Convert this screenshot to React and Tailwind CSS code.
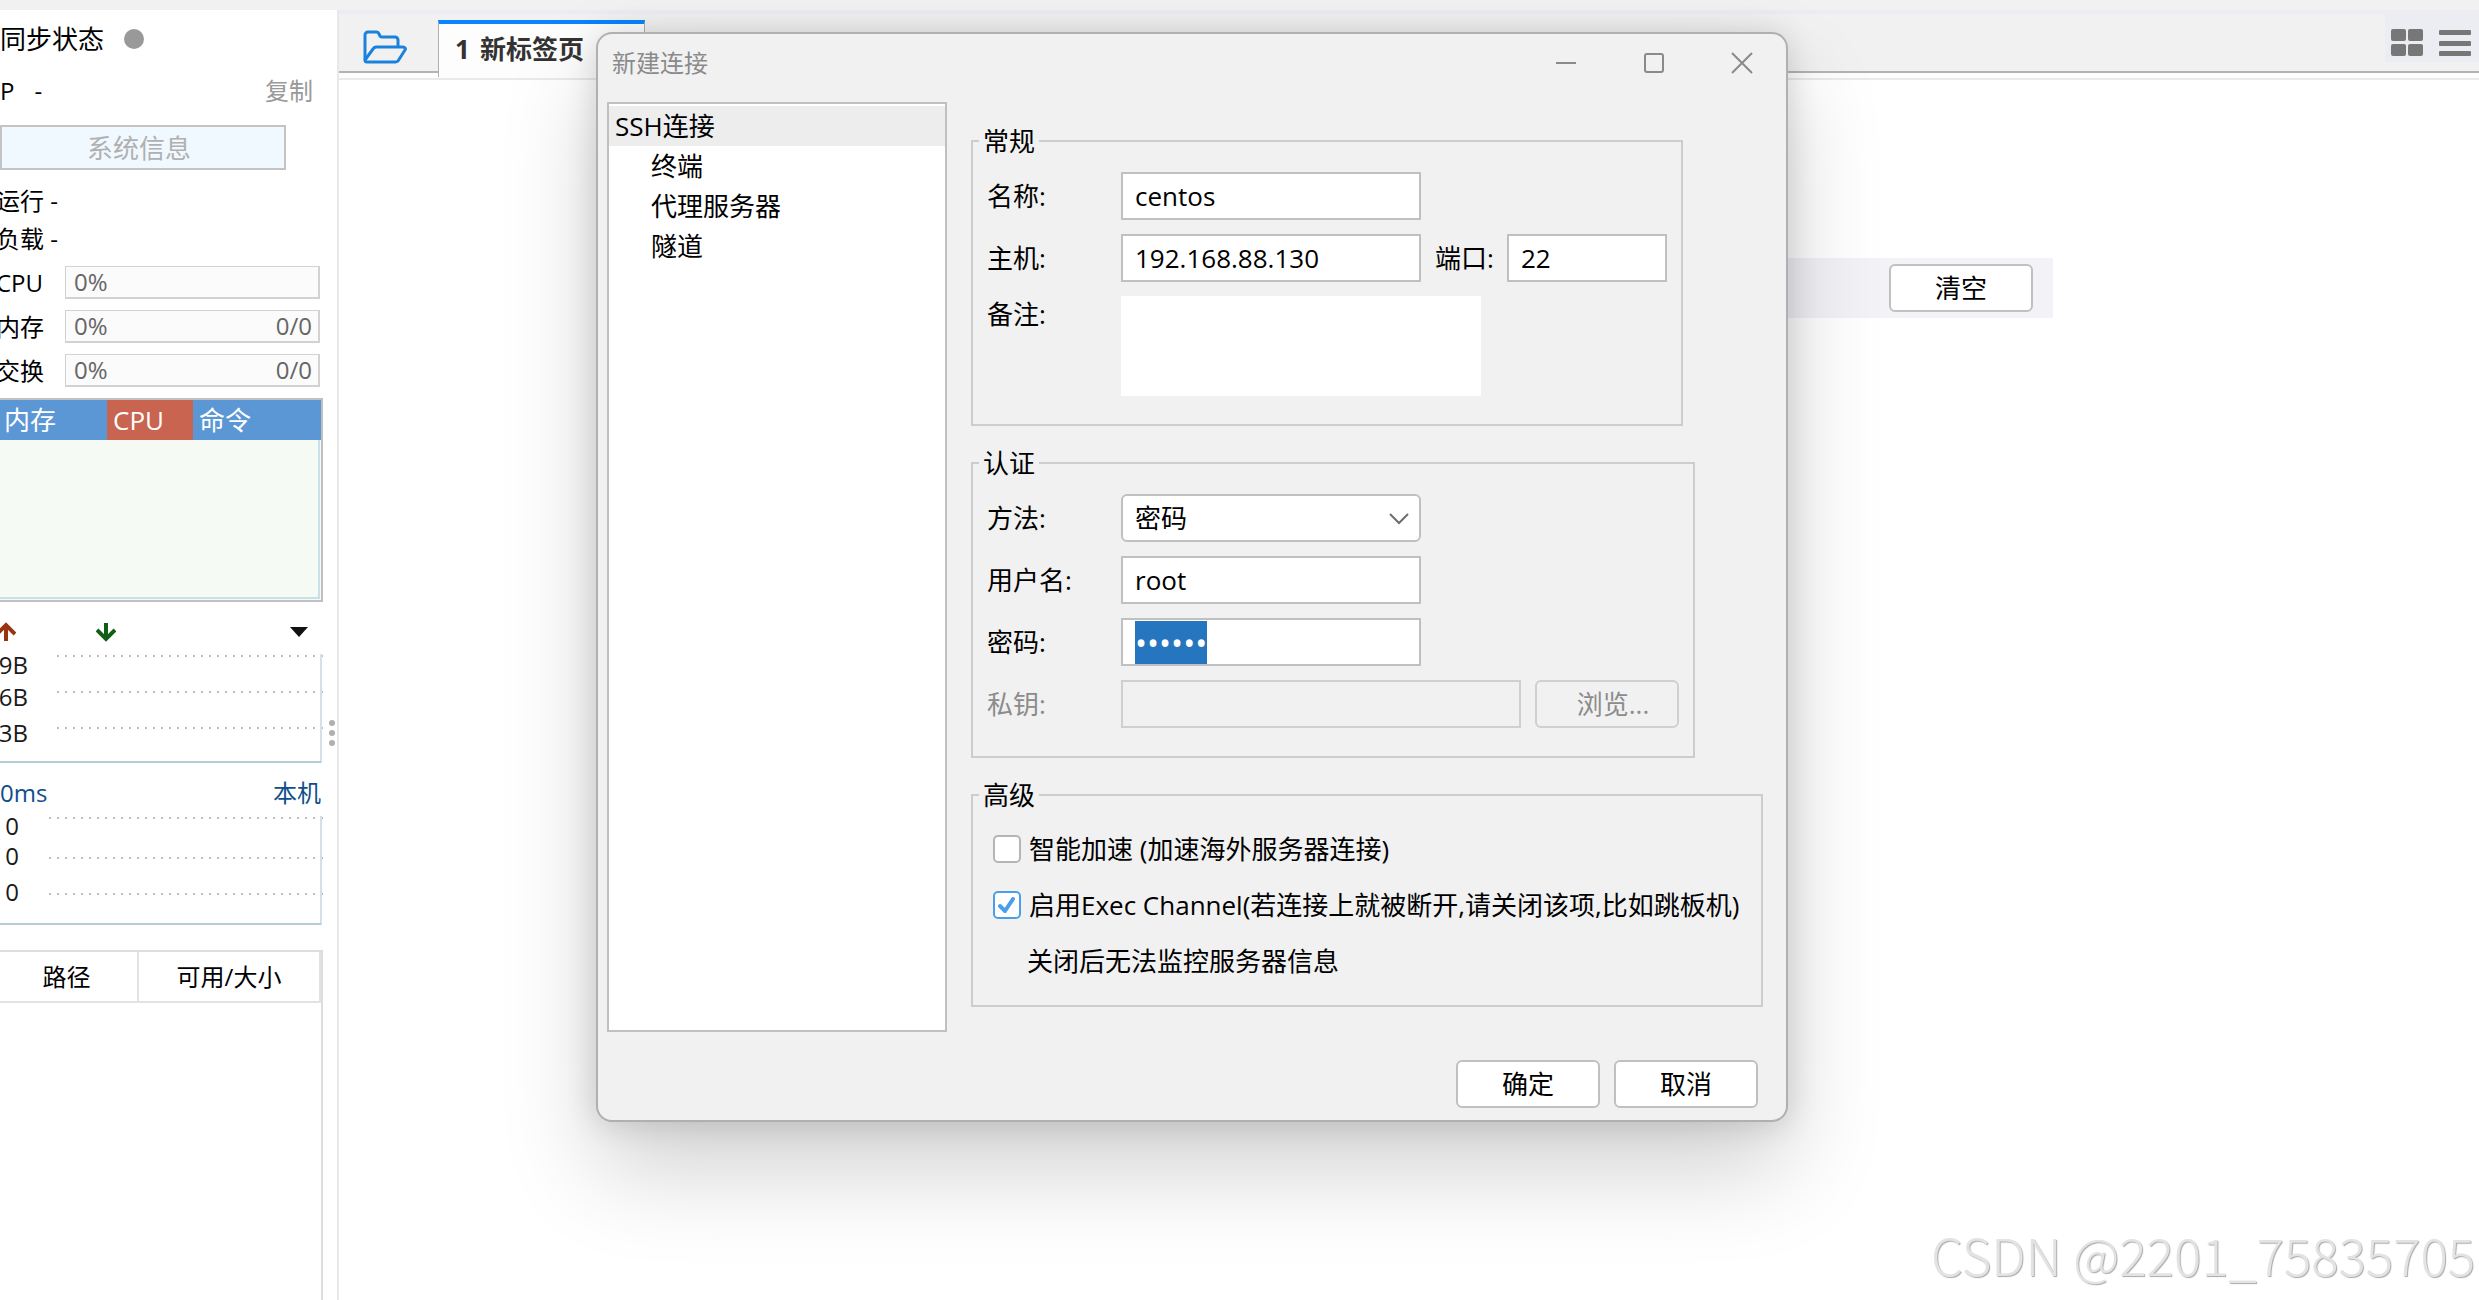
import React, { useEffect, useRef } from "react";

const fieldClass =
  "h-12 border-2 border-[#c0c0c0] bg-white px-3 leading-9 text-black outline-none disabled:border-[#cfcfcf] disabled:bg-transparent";

const buttonClass =
  "h-12 w-36 rounded-md border-2 border-[#c0c0c0] bg-white text-[26px] leading-9 text-black disabled:border-[#cfcfcf] disabled:bg-transparent disabled:text-[#8c8c8c]";

const meters = [
  { label: "CPU", percent: "0%", usage: "" },
  { label: "内存", percent: "0%", usage: "0/0" },
  { label: "交换", percent: "0%", usage: "0/0" },
];

const networkChart = {
  start: 61,
  labelEnd: 32,
  lines: [2, 38, 74],
  labels: [
    { text: "9B", y: 20 },
    { text: "6B", y: 52 },
    { text: "3B", y: 88 },
  ],
};

const pingChart = {
  start: 53,
  labelEnd: 23,
  lines: [2, 42, 78],
  labels: [
    { text: "0", y: 19 },
    { text: "0", y: 49 },
    { text: "0", y: 85 },
  ],
};

const Chart = ({ chart }) => (
  <svg viewBox="0 0 328 109" className="block h-[109px] w-[328px]">
    {chart.lines.map((y) => (
      <line key={y} x1={chart.start} x2="327" y1={y} y2={y} stroke="#bdbdbd" strokeWidth="2" strokeDasharray="2 6" />
    ))}
    {chart.labels.map((label) => (
      <text key={label.y} x={chart.labelEnd} y={label.y} textAnchor="end" fontSize="24" fill="#1a1a1a">
        {label.text}
      </text>
    ))}
    <path d="M325 0V109" stroke="#d3e1e8" strokeWidth="2" />
    <path d="M0 108H325" stroke="#b6cdd5" strokeWidth="2" />
  </svg>
);

const Sidebar = () => (
  <aside className="relative flex w-[339px] shrink-0 flex-col overflow-hidden border-r-2 border-[#e8e8e8] bg-white">
    <div className="-ml-1 flex grow flex-col text-2xl">
      <div className="flex h-[58px] items-center gap-5 pl-1 text-[26px]">
        <span>同步状态</span>
        <span className="size-5 rounded-full bg-[#999999]"></span>
      </div>
      <div className="flex h-[46px] items-center justify-between pr-6">
        <span className="flex gap-5 pl-1">
          <span>P</span>
          <span>-</span>
        </span>
        <button type="button" className="text-[#999999]">复制</button>
      </div>
      <button
        type="button"
        className="mt-[11px] ml-1 h-[45px] w-[286px] border-2 border-[#c4c4c4] bg-[#f0f9ff] pr-2 text-[26px] leading-9 text-[#b0b0b0]"
      >
        系统信息
      </button>
      <div className="mt-3 leading-[38px]">
        <p>运行 -</p>
        <p>负载 -</p>
      </div>

      {/* Usage meters */}
      <div className="mt-2 flex flex-col gap-[11px]">
        {meters.map((meter) => (
          <div key={meter.label} className="flex h-[33px] items-center">
            <span className="w-[69px]">{meter.label}</span>
            <div className="flex h-[33px] w-[255px] items-center justify-between border border-r-2 border-b-2 border-[#d2d2d2] bg-[#fbfbfb] pr-1.5 pl-2 text-[#666666]">
              <span>{meter.percent}</span>
              <span>{meter.usage}</span>
            </div>
          </div>
        ))}
      </div>

      {/* Processes */}
      <div className="mt-[11px] h-[204px] w-[327px] border-2 border-[#c0c0c0] bg-[#f5faf5]">
        <div className="flex h-full flex-col">
          <table className="w-full table-fixed text-left text-[26px] text-white">
            <thead>
              <tr className="h-10 bg-[#5b97d5] leading-10">
                <th className="w-[109px] pl-[6px] font-normal">内存</th>
                <th className="w-[86px] bg-[#c8644f] pl-[6px] font-normal">CPU</th>
                <th className="pl-[6px] font-normal">命令</th>
              </tr>
            </thead>
          </table>
          <div className="mr-px mb-px grow border-r-2 border-b-2 border-[#cbdfea]"></div>
        </div>
      </div>

      {/* Network */}
      <div className="flex h-[52px] items-end pb-3">
        <svg viewBox="0 0 20 20" className="size-5" fill="none" stroke="#993311" strokeWidth="4">
          <path d="M10 19V3M1 12l9-9 9 9" />
        </svg>
        <svg viewBox="0 0 20 20" className="ml-20 size-5" fill="none" stroke="#135e16" strokeWidth="4">
          <path d="M10 1v16M1 8l9 9 9-9" />
        </svg>
        <svg viewBox="0 0 20 20" className="mr-7 ml-auto size-5" fill="#111111">
          <path d="M1 5h18l-9 10z" />
        </svg>
      </div>
      <Chart chart={networkChart} />
      <div className="flex h-[53px] w-[325px] items-center justify-between pt-1.5 text-[#104e8b]">
        <span className="pl-1">0ms</span>
        <span>本机</span>
      </div>
      <Chart chart={pingChart} />

      {/* Disks */}
      <div className="mt-[25px] w-[327px] grow border-t-2 border-r-2 border-[#dddddd]">
        <table className="w-full table-fixed">
          <thead>
            <tr className="h-[50px]">
              <th className="w-[142px] border-r-2 border-b-2 border-[#e2e2e2] font-normal">路径</th>
              <th className="border-r-2 border-b-2 border-[#e2e2e2] font-normal">可用/大小</th>
            </tr>
          </thead>
        </table>
      </div>
    </div>

    {/* Resize handle */}
    <div className="absolute top-[710px] right-0.5 flex flex-col gap-1">
      <span className="size-1.5 rounded-full bg-[#b0b0b0]"></span>
      <span className="size-1.5 rounded-full bg-[#b0b0b0]"></span>
      <span className="size-1.5 rounded-full bg-[#b0b0b0]"></span>
    </div>
  </aside>
);

const TabBar = () => (
  <header className="border-b-2 border-[#eaeaea] bg-[#fdfdfd] pb-[5px]">
    <div className="flex h-[63px] border-t-4 border-[#ebedf2] bg-[#f1f1f1]">
      <button type="button" aria-label="打开" className="flex w-[99px] items-center justify-center border-b-2 border-b-[#b3b3b3] pt-2 pr-2">
        <svg viewBox="0 0 44 34" className="h-[34px] w-11" fill="none" stroke="#1a82dc" strokeWidth="3" strokeLinejoin="round">
          <path d="M2 30V5a3 3 0 0 1 3-3h8a3 3 0 0 1 3 2l1 2a2 2 0 0 0 2 1h13a3 3 0 0 1 3 3v7" />
          <path d="M2 30l8-11a4 4 0 0 1 3-2h27c2 0 3 2 2 3l-7 11a4 4 0 0 1-3 1H4a2 2 0 0 1-2-2z" />
        </svg>
      </button>
      <div className="-mb-1 flex w-[207px] pt-1.5">
        <button
          type="button"
          className="flex w-full items-start gap-2.5 border-t-4 border-r border-l border-t-[#0a84ff] border-r-[#b0b0b0] border-l-[#b0b0b0] bg-[#fdfdfd] pl-4 text-[26px] leading-[50px] font-bold text-[#333333]"
        >
          <span>1</span>
          <span>新标签页</span>
        </button>
      </div>
      <div className="grow border-b-2 border-b-[#b3b3b3]"></div>
      <div className="border-b-2 border-b-[#b3b3b3]">
        <div className="flex h-12 items-center gap-4 bg-[#ecedf2] pt-2 pr-2 pl-1.5">
          <button type="button" aria-label="网格">
            <svg viewBox="0 0 32 27" className="h-[27px] w-8" fill="#777777">
              <rect width="15" height="12" rx="2" />
              <rect x="17" width="15" height="12" rx="2" />
              <rect y="15" width="15" height="12" rx="2" />
              <rect x="17" y="15" width="15" height="12" rx="2" />
            </svg>
          </button>
          <button type="button" aria-label="菜单">
            <svg viewBox="0 0 32 27" className="h-[27px] w-8" fill="#777777">
              <rect y="1" width="32" height="5" rx="1" />
              <rect y="12" width="32" height="5" rx="1" />
              <rect y="22" width="32" height="5" rx="1" />
            </svg>
          </button>
        </div>
      </div>
    </div>
  </header>
);

const Group = ({ title, className, children }) => (
  <fieldset className={`border-2 border-[#cdcdcd] px-3.5 ${className}`}>
    <legend className="-ml-2 px-1 leading-9">{title}</legend>
    {children}
  </fieldset>
);

const CheckOption = ({ id, checked, children }) => (
  <div className="flex h-9 items-center gap-2">
    <span className="relative size-7">
      <input
        id={id}
        type="checkbox"
        defaultChecked={checked}
        className="peer block size-7 appearance-none rounded-[5px] border-2 border-[#b5b5b5] bg-white checked:border-[#4a9fe8]"
      />
      <svg
        viewBox="0 0 28 28"
        className="pointer-events-none absolute inset-0 hidden size-7 peer-checked:block"
        fill="none"
        stroke="#4a9fe8"
        strokeWidth="4"
        strokeLinecap="round"
        strokeLinejoin="round"
      >
        <path d="M7 15l5 5L20 8" />
      </svg>
    </span>
    <label htmlFor={id}>{children}</label>
  </div>
);

const ConnectionDialog = () => {
  const passwordRef = useRef(null);

  useEffect(() => {
    passwordRef.current.focus();
    passwordRef.current.select();
  }, []);

  return (
    <div
      role="dialog"
      aria-labelledby="dialog-title"
      className="absolute top-8 left-[596px] w-[1192px] rounded-2xl border-2 border-[#b0b0b0] bg-[#f1f1f1] text-[26px] leading-9 shadow-[0_48px_96px_rgba(0,0,0,0.18),0_2px_32px_rgba(0,0,0,0.14)]"
    >
      <div className="mb-2.5 flex h-[58px] items-center pl-3.5 text-[#8a8a8a]">
        <h2 id="dialog-title" className="grow text-2xl">新建连接</h2>
        <button type="button" aria-label="最小化" className="flex w-[88px] justify-center">
          <svg viewBox="0 0 24 24" className="size-6" stroke="currentColor" strokeWidth="2">
            <path d="M2 12h20" />
          </svg>
        </button>
        <button type="button" aria-label="最大化" className="flex w-[88px] justify-center">
          <svg viewBox="0 0 24 24" className="size-6" fill="none" stroke="currentColor" strokeWidth="2">
            <rect x="3" y="3" width="18" height="18" rx="2" />
          </svg>
        </button>
        <button type="button" aria-label="关闭" className="flex w-[88px] justify-center">
          <svg viewBox="0 0 24 24" className="size-6" stroke="currentColor" strokeWidth="2">
            <path d="M2 2l20 20M22 2L2 22" />
          </svg>
        </button>
      </div>

      <div className="flex gap-6 px-[9px]">
        <ul className="w-[340px] shrink-0 border-2 border-[#c0c0c0] bg-white pt-0.5 leading-10">
          <li className="bg-[#ededed] pl-1.5">SSH连接</li>
          <li className="pl-[42px]">终端</li>
          <li className="pl-[42px]">代理服务器</li>
          <li className="pl-[42px]">隧道</li>
        </ul>

        <form className="flex flex-col items-start gap-[19px] pt-[21px] pb-[25px]">
          <Group title="常规" className="pt-[13px] pb-7">
            <div className="flex flex-col gap-3.5">
              <div className="flex items-center">
                <label htmlFor="name" className="w-[134px]">名称:</label>
                <input id="name" defaultValue="centos" className={`${fieldClass} w-[300px]`} />
              </div>
              <div className="flex items-center">
                <label htmlFor="host" className="w-[134px]">主机:</label>
                <input id="host" defaultValue="192.168.88.130" className={`${fieldClass} w-[300px]`} />
                <label htmlFor="port" className="w-[86px] pl-3.5">端口:</label>
                <input id="port" defaultValue="22" className={`${fieldClass} w-40`} />
              </div>
              <div className="flex items-start">
                <label htmlFor="note" className="w-[134px]">备注:</label>
                <textarea id="note" className="h-[100px] w-[360px] resize-none bg-white outline-none"></textarea>
              </div>
            </div>
          </Group>

          <Group title="认证" className="pt-[13px] pb-7">
            <div className="flex flex-col gap-3.5">
              <div className="flex items-center">
                <label htmlFor="method" className="w-[134px]">方法:</label>
                <div className="relative">
                  <select id="method" className={`${fieldClass} block w-[300px] appearance-none rounded-md`}>
                    <option>密码</option>
                  </select>
                  <svg viewBox="0 0 20 12" className="pointer-events-none absolute top-[19px] right-3 h-3 w-5" fill="none" stroke="#6e6e6e" strokeWidth="2">
                    <path d="M1 1l9 9 9-9" />
                  </svg>
                </div>
              </div>
              <div className="flex items-center">
                <label htmlFor="user" className="w-[134px]">用户名:</label>
                <input id="user" defaultValue="root" className={`${fieldClass} w-[300px]`} />
              </div>
              <div className="flex items-center">
                <label htmlFor="password" className="w-[134px]">密码:</label>
                <input
                  id="password"
                  ref={passwordRef}
                  type="password"
                  defaultValue="123456"
                  className={`${fieldClass} w-[300px] text-[32px] selection:bg-[#2675bf] selection:text-white`}
                />
              </div>
              <div className="flex items-center">
                <label htmlFor="key" className="w-[134px] text-[#8c8c8c]">私钥:</label>
                <input id="key" disabled className={`${fieldClass} w-[400px]`} />
                <button type="button" disabled className={`${buttonClass} ml-3.5 pl-3`}>浏览...</button>
              </div>
            </div>
          </Group>

          <Group title="高级" className="w-[792px] pt-[18px] pb-[26px]">
            <div className="flex flex-col gap-5 pl-1.5">
              <CheckOption id="accelerate">智能加速 (加速海外服务器连接)</CheckOption>
              <CheckOption id="exec" checked>
                启用Exec Channel(若连接上就被断开,请关闭该项,比如跳板机)
              </CheckOption>
              <p className="pl-[34px]">关闭后无法监控服务器信息</p>
            </div>
          </Group>
        </form>
      </div>

      <div className="mt-7 flex justify-end gap-3.5 pr-7 pb-3">
        <button type="button" className={buttonClass}>确定</button>
        <button type="button" className={buttonClass}>取消</button>
      </div>
    </div>
  );
};

const App = () => {
  return (
    <div className="relative flex min-h-screen flex-col overflow-hidden bg-[#f1f1f1] pt-2.5 font-['Open_Sans','Noto_Sans_CJK_SC',sans-serif] text-black">
      <div className="flex grow">
        <Sidebar />
        <main className="flex grow flex-col bg-white">
          <TabBar />
          <div className="mt-[178px] ml-[500px] flex h-[60px] w-[1214px] items-center justify-end bg-[#f2f2f7] pr-5">
            <button type="button" className={buttonClass}>清空</button>
          </div>
        </main>
      </div>

      <ConnectionDialog />

      <p className="absolute right-1 bottom-5 font-['Noto_Sans_CJK_SC',sans-serif] text-[51px] leading-none font-light text-[#e3e3e3] [text-shadow:1px_1px_1px_#aaaaaa]">
        CSDN @2201_75835705
      </p>
    </div>
  );
};

export default App;
